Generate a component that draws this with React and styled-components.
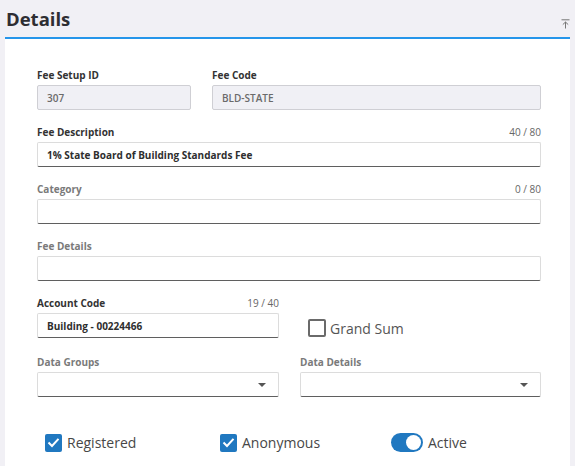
import React from "react";
import styled, { createGlobalStyle } from "styled-components";

const Global = createGlobalStyle`
  html, body { margin: 0; padding: 0; background: #f1f0f5; }
  body { font-family: "Open Sans", "Liberation Sans", sans-serif; color: #333; }
  * { box-sizing: border-box; }
`;

const Page = styled.div`
  width: 575px;
  height: 466px;
  overflow: hidden;
  background: #f1f0f5;
  padding: 0 5px 0 5px;
  display: flex;
  flex-direction: column;
`;

const Header = styled.div`
  height: 37px;
  display: flex;
  align-items: flex-start;
  justify-content: space-between;
  padding: 6px 0 0 1px;
`;

const Title = styled.h2`
  margin: 0;
  font-size: 18.5px;
  font-weight: 700;
  line-height: 26px;
  color: #2e2e33;
`;

const PinIcon = styled.svg`
  margin-top: 13px;
  margin-right: 0;
`;

const Panel = styled.div`
  flex: 1;
  background: #fff;
  border-top: 2px solid #2595ea;
  padding: 29px 29px 0 32px;
  display: flex;
  flex-direction: column;
`;

const Grid = styled.div`
  display: grid;
  grid-template-columns: ${(p) => p.$cols};
  column-gap: 21px;
  margin-top: ${(p) => p.$mt || 0}px;
`;

const Field = styled.div`
  display: flex;
  flex-direction: column;
`;

const LabelRow = styled.div`
  display: flex;
  justify-content: space-between;
  align-items: center;
  height: 14px;
  margin-bottom: 3px;
`;

const Label = styled.span`
  font-size: 10px;
  font-weight: 700;
  color: ${(p) => (p.$muted ? "#7a7a7a" : "#333")};
`;

const Counter = styled.span`
  font-size: 10px;
  color: #666;
`;

const Input = styled.div`
  height: 25px;
  border: 1px solid ${(p) => (p.$disabled ? "#cfcfd4" : "#dcdcdc")};
  border-bottom: 1px solid ${(p) => (p.$disabled ? "#cfcfd4" : "#5f5f5f")};
  border-radius: 2px;
  background: ${(p) => (p.$disabled ? "#f0f0f5" : "#fff")};
  display: flex;
  align-items: center;
  justify-content: space-between;
  padding: 0 12px 0 9px;
  font-size: 10px;
  font-weight: ${(p) => (p.$disabled ? 600 : 700)};
  color: ${(p) => (p.$disabled ? "#6a6a6a" : "#2e2e2e")};
`;

const Caret = styled.span`
  width: 0;
  height: 0;
  border-left: 4px solid transparent;
  border-right: 4px solid transparent;
  border-top: 4px solid #555;
`;

const InlineCheck = styled.label`
  display: flex;
  align-items: center;
  gap: 4px;
  padding: 22px 0 0 8px;
  font-size: 14px;
  color: #555;
  font-weight: 400;
`;

const EmptyBox = styled.span`
  width: 18px;
  height: 18px;
  border: 2px solid #6a6a6a;
  border-radius: 2px;
`;

const BottomRow = styled.div`
  display: grid;
  grid-template-columns: 175px 171px auto;
  padding-left: 8px;
  margin-top: 36px;
`;

const Option = styled.label`
  display: flex;
  align-items: center;
  gap: 5px;
  font-size: 14px;
  color: #474747;
`;

const CheckedBox = styled.span`
  width: 17px;
  height: 18px;
  border-radius: 2px;
  background: #2078c0;
  display: flex;
  align-items: center;
  justify-content: center;
`;

const Toggle = styled.span`
  width: 32px;
  height: 19px;
  border-radius: 10px;
  background: #2078c0;
  display: flex;
  align-items: center;
  justify-content: flex-end;
  padding-right: 2px;
`;

const Knob = styled.span`
  width: 15px;
  height: 15px;
  border-radius: 50%;
  background: #fff;
`;

const Check = () => (
  <svg width="13" height="11" viewBox="0 0 13 11">
    <path d="M1.5 5.5 L5 9 L11.5 1.8" fill="none" stroke="#fff" strokeWidth="2" />
  </svg>
);

function TextField({ label, muted, counter, value, disabled, select }) {
  return (
    <Field>
      <LabelRow>
        <Label $muted={muted}>{label}</Label>
        {counter && <Counter>{counter}</Counter>}
      </LabelRow>
      <Input $disabled={disabled}>
        <span>{value}</span>
        {select && <Caret />}
      </Input>
    </Field>
  );
}

export default function App() {
  return (
    <>
      <Global />
      <Page>
        <Header>
          <Title>Details</Title>
          <PinIcon width="9" height="10" viewBox="0 0 9 10">
            <path d="M0.5 0.8 H8.5 M4.5 9.5 V3 M1.8 5.6 L4.5 3 L7.2 5.6" fill="none" stroke="#777" strokeWidth="1" />
          </PinIcon>
        </Header>
        <Panel>
          <Grid $cols="154px 1fr">
            <TextField label="Fee Setup ID" value="307" disabled />
            <TextField label="Fee Code" value="BLD-STATE" disabled />
          </Grid>
          <Grid $cols="1fr" $mt={15}>
            <TextField label="Fee Description" counter="40 / 80" value="1% State Board of Building Standards Fee" />
          </Grid>
          <Grid $cols="1fr" $mt={15}>
            <TextField label="Category" muted counter="0 / 80" value="" />
          </Grid>
          <Grid $cols="1fr" $mt={15}>
            <TextField label="Fee Details" muted value="" />
          </Grid>
          <Grid $cols="242px 1fr" $mt={15}>
            <TextField label="Account Code" counter="19 / 40" value="Building - 00224466" />
            <InlineCheck>
              <EmptyBox />
              Grand Sum
            </InlineCheck>
          </Grid>
          <Grid $cols="242px 1fr" $mt={17}>
            <TextField label="Data Groups" muted value="" select />
            <TextField label="Data Details" muted value="" select />
          </Grid>
          <BottomRow>
            <Option>
              <CheckedBox><Check /></CheckedBox>
              Registered
            </Option>
            <Option>
              <CheckedBox><Check /></CheckedBox>
              Anonymous
            </Option>
            <Option>
              <Toggle><Knob /></Toggle>
              Active
            </Option>
          </BottomRow>
        </Panel>
      </Page>
    </>
  );
}
